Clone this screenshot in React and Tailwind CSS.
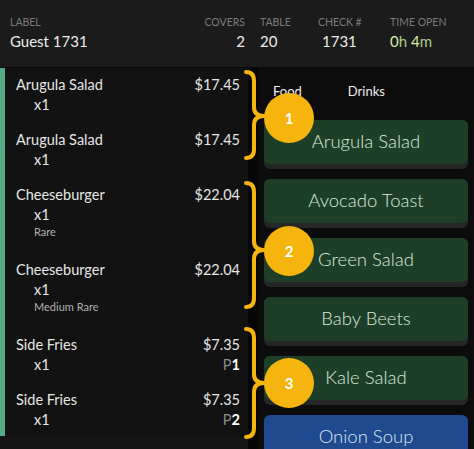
import React from "react";

const items = [
  { name: "Arugula Salad", price: "$17.45" },
  { name: "Arugula Salad", price: "$17.45" },
  { name: "Cheeseburger", price: "$22.04", mod: "Rare" },
  { name: "Cheeseburger", price: "$22.04", mod: "Medium Rare" },
  { name: "Side Fries", price: "$7.35", seat: "1" },
  { name: "Side Fries", price: "$7.35", seat: "2" },
];

const buttons = [
  "Arugula Salad",
  "Avocado Toast",
  "Green Salad",
  "Baby Beets",
  "Kale Salad",
];

function brace(top, mid, bottom) {
  return `M246,${top} Q254,${top} 254,${top + 9} L254,${mid - 9} Q254,${mid} 264,${mid} Q254,${mid} 254,${mid + 9} L254,${bottom - 9} Q254,${bottom} 246,${bottom}`;
}

export default function App() {
  return (
    <div
      className="relative w-[474px] h-[449px] overflow-hidden bg-[#111111] text-white"
      style={{ fontFamily: "Lato, 'Noto Sans', sans-serif" }}
    >
      {/* Header */}
      <div className="h-[68px] bg-[#1b1b1b] border-b border-[#0a0a0a] flex pt-[15px]">
        <div className="pl-[10px] w-[190px]">
          <div className="text-[10.5px] leading-[14px] text-[#7a7a7a]">LABEL</div>
          <div className="text-[15px] leading-[24px] text-[#ececec]">Guest 1731</div>
        </div>
        <div className="w-[55px] text-right">
          <div className="text-[10.5px] leading-[14px] text-[#7a7a7a]">COVERS</div>
          <div className="text-[15px] leading-[24px] text-[#ececec]">2</div>
        </div>
        <div className="pl-[15px] w-[73px]">
          <div className="text-[10.5px] leading-[14px] text-[#7a7a7a]">TABLE</div>
          <div className="text-[15px] leading-[24px] text-[#ececec]">20</div>
        </div>
        <div className="w-[72px]">
          <div className="text-[10.5px] leading-[14px] text-[#7a7a7a]">CHECK #</div>
          <div className="text-[15px] leading-[24px] text-[#ececec] pl-[4px]">1731</div>
        </div>
        <div>
          <div className="text-[10.5px] leading-[14px] text-[#7a7a7a]">TIME OPEN</div>
          <div className="text-[15px] leading-[24px]">
            <span className="text-[#d6eba6]">0</span>
            <span className="text-[#a9cc8c]">h </span>
            <span className="text-[#d6eba6]">4</span>
            <span className="text-[#a9cc8c]">m</span>
          </div>
        </div>
      </div>

      <div className="flex h-[381px]">
        {/* Left: order list */}
        <div className="w-[248px] flex flex-col bg-[#121212]">
          <div className="flex h-[368px] shrink-0">
            <div className="w-[5px] bg-[#55ab88]" />
            <div className="flex-1 pl-[11px] pr-[8px] pt-[7px]">
              {items.map((it, i) => (
                <div key={i} className="pb-[16px]">
                  <div className="flex justify-between text-[14.5px] leading-[20px] text-[#e6e6e6]">
                    <span>{it.name}</span>
                    <span>{it.price}</span>
                  </div>
                  <div className="flex justify-between pl-[18px] text-[14.5px] leading-[19px] text-[#e6e6e6]">
                    <span>x1</span>
                    {it.seat && (
                      <span>
                        <span className="text-[#8a8a8a]">P</span>
                        <span className="font-bold text-white">{it.seat}</span>
                      </span>
                    )}
                  </div>
                  {it.mod && (
                    <div className="pl-[18px] mb-[4px] text-[11px] leading-[16px] text-[#b0b0b0]">
                      {it.mod}
                    </div>
                  )}
                </div>
              ))}
            </div>
          </div>
          <div className="flex-1 bg-[#161616]" />
        </div>

        {/* Divider gap */}
        <div className="w-[10px] bg-[#060606]" />

        {/* Right: menu */}
        <div className="flex-1 bg-[#0c0c0c] flex flex-col">
          <div className="h-[52px] shrink-0 flex items-start pt-[14px] text-[13px] text-[#ededed]">
            <span className="ml-[15px]">Food</span>
            <span className="ml-[46px]">Drinks</span>
          </div>
          <div className="flex flex-col gap-[10px] pl-[6px] pr-[6px] shrink-0">
            {buttons.map((b) => (
              <div
                key={b}
                className="h-[49px] shrink-0 rounded-[6px] bg-[#262626] flex flex-col"
              >
                <div className="h-[44px] shrink-0 rounded-[6px] bg-[#1d3f28] flex items-center justify-center text-[18.5px] font-light text-[#dbe9dc]">
                  {b}
                </div>
              </div>
            ))}
            <div className="h-[49px] shrink-0 rounded-[6px] bg-[#1f4a8f] flex items-start justify-center pt-[8px] text-[18.5px] font-light text-[#dde6f2]">
              Onion Soup
            </div>
          </div>
        </div>
      </div>

      {/* Annotation overlay */}
      <svg
        className="absolute left-0 top-0 pointer-events-none"
        width="474"
        height="449"
        viewBox="0 0 474 449"
      >
        <g fill="none" stroke="#f6b40f" strokeWidth="4" strokeLinecap="round" strokeLinejoin="round">
          <path d={brace(72, 116, 158)} />
          <path d={brace(183, 250, 307)} />
          <path d={brace(329, 383, 437)} />
        </g>
        <g fill="#f6b40f">
          <circle cx="289" cy="118" r="25" />
          <circle cx="289" cy="251" r="25" />
          <circle cx="289" cy="383" r="25" />
        </g>
        <g
          fill="#ffffff"
          fontSize="15"
          fontWeight="700"
          textAnchor="middle"
          style={{ fontFamily: "Lato, 'Noto Sans', sans-serif" }}
        >
          <text x="289" y="123.5">1</text>
          <text x="289" y="256.5">2</text>
          <text x="289" y="388.5">3</text>
        </g>
      </svg>
    </div>
  );
}
